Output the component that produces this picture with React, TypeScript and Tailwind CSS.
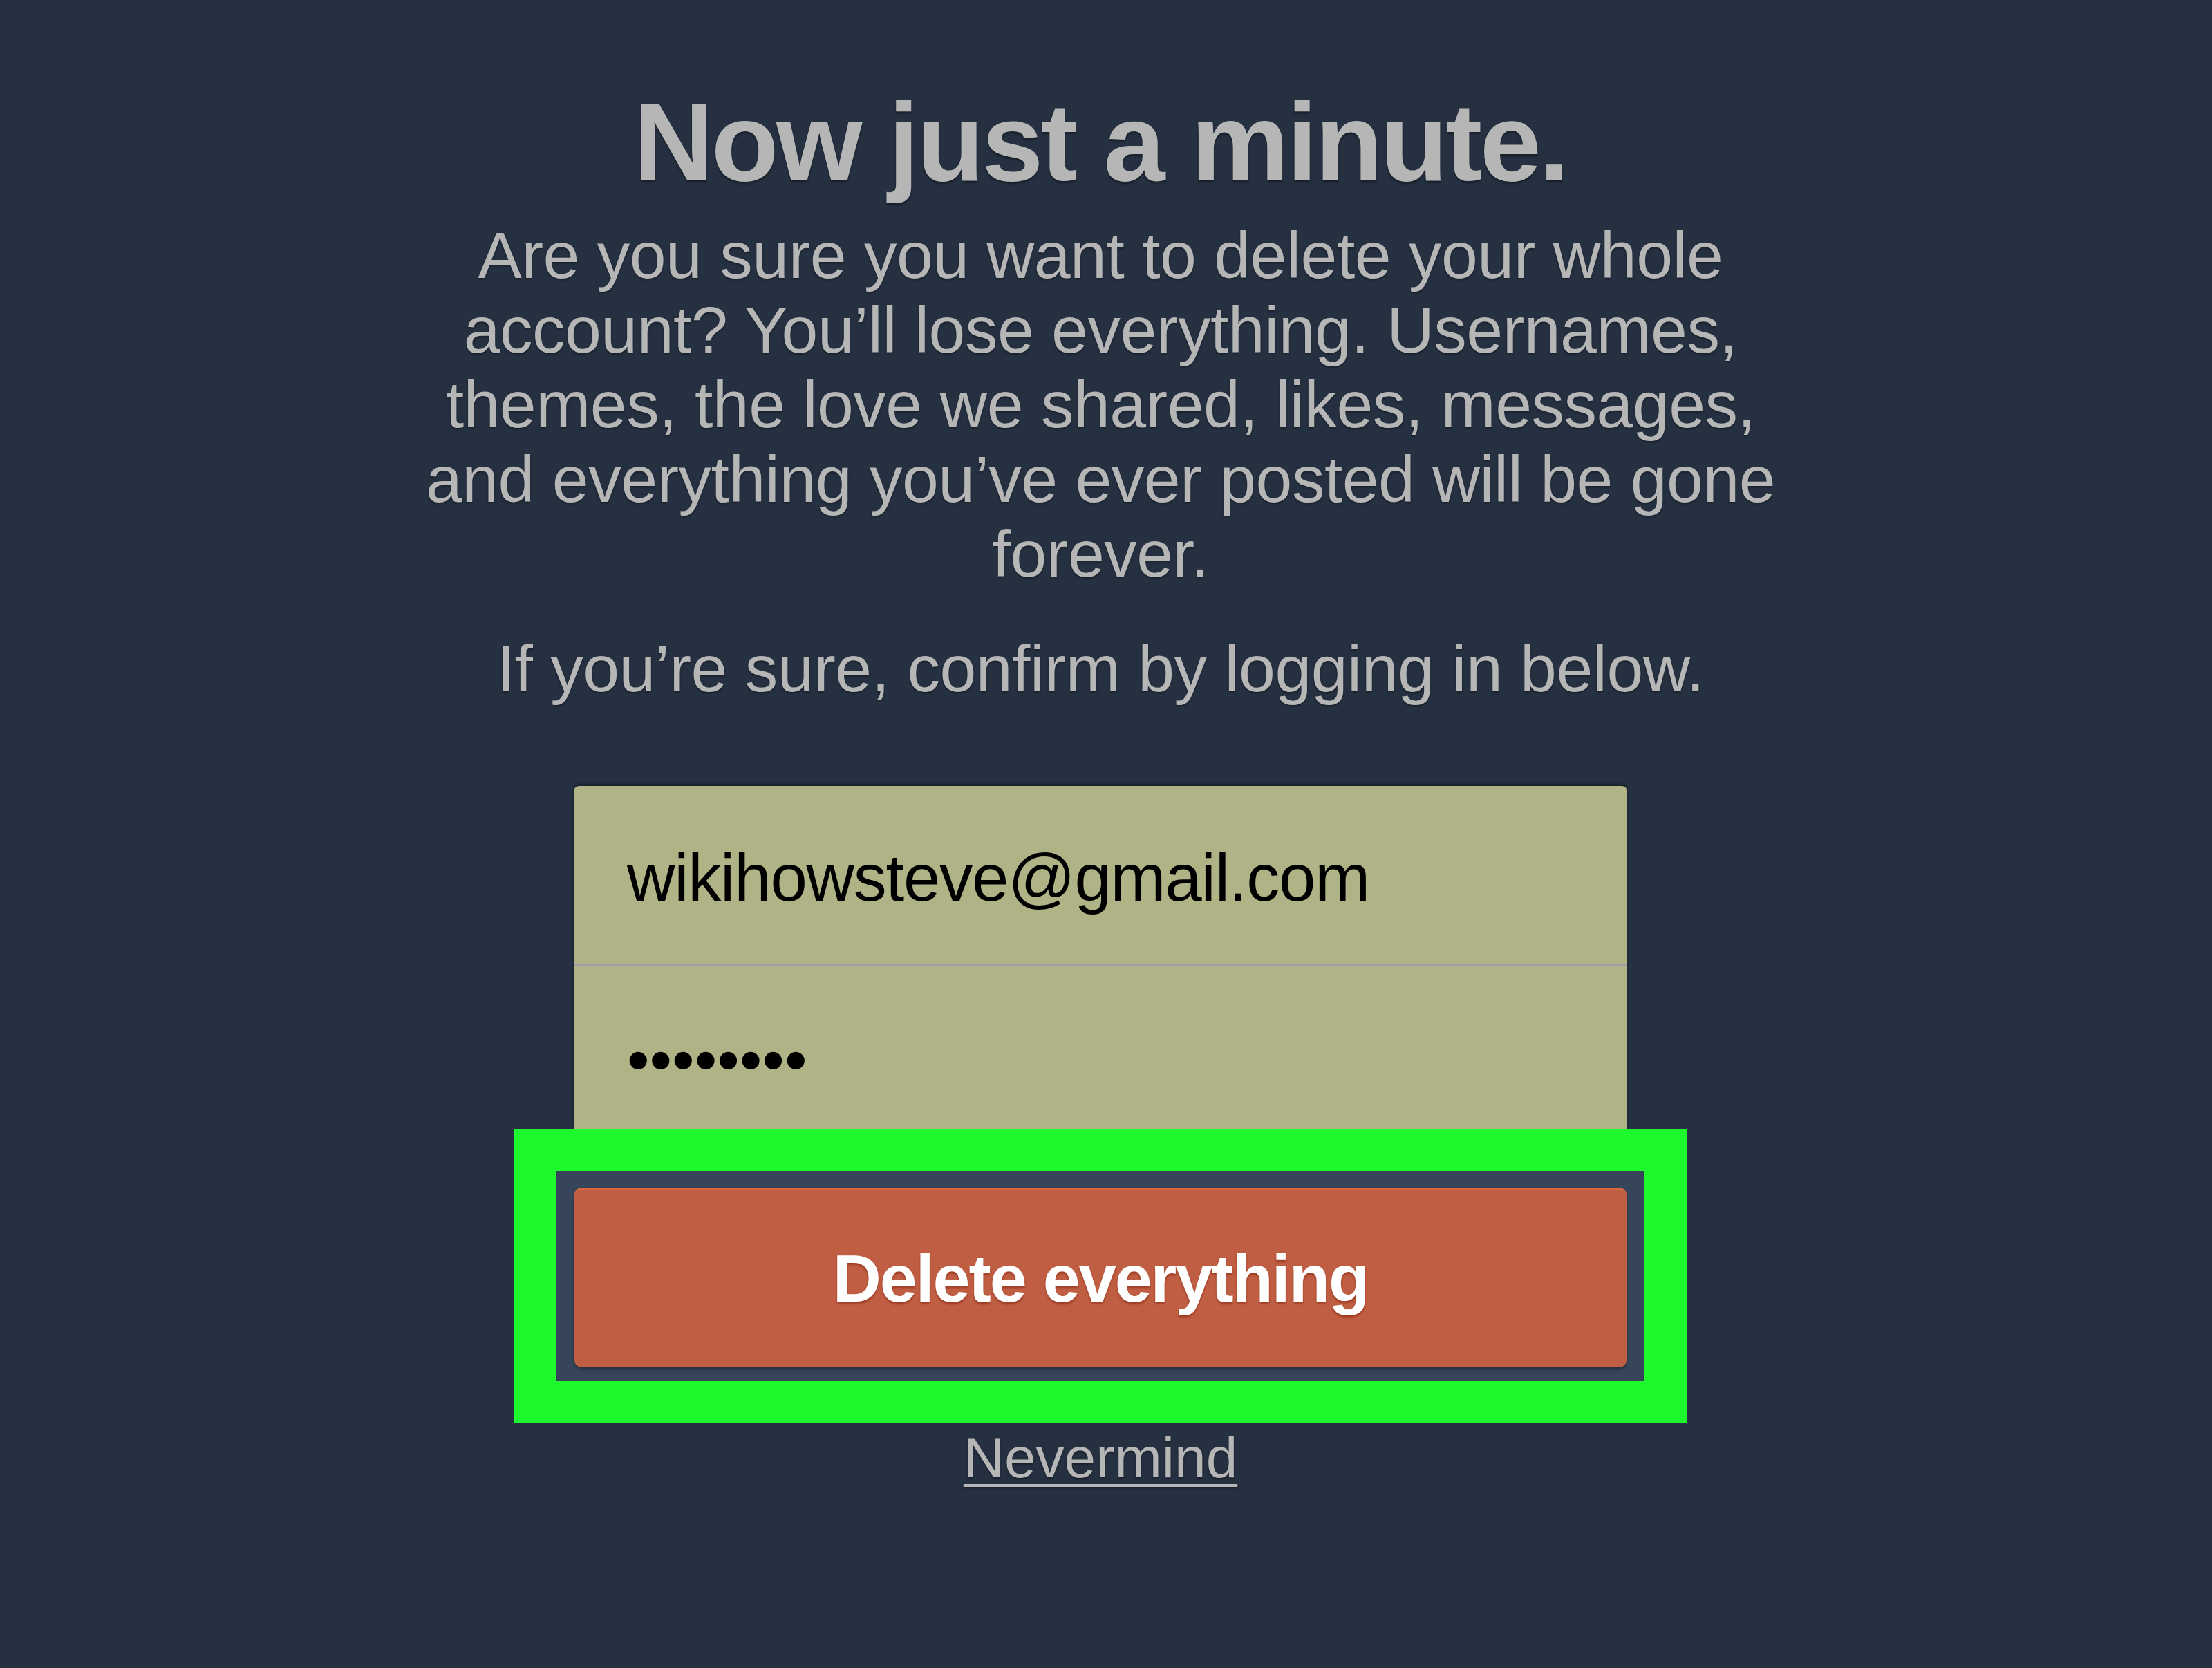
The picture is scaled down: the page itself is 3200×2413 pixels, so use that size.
import { useState } from 'react'

const font = { fontFamily: '"Liberation Sans", Arial, sans-serif' }

export default function App() {
  const [email, setEmail] = useState('wikihowsteve@gmail.com')
  const [password, setPassword] = useState('12345678')

  return (
    <div
      style={font}
      className="min-h-[2413px] w-full bg-[#253041] flex flex-col items-center pr-[16px] text-[#b6b6b6]"
    >
      <h1 className="pt-[126px] text-[160px] leading-none font-bold tracking-[-3.5px] [text-shadow:0_3px_3px_rgba(0,0,0,0.35)]">
        Now just a minute.
      </h1>

      <p className="mt-[29px] w-[2010px] text-center text-[95px] leading-[108px] tracking-[-0.5px] [text-shadow:0_2px_3px_rgba(0,0,0,0.35)]">
        Are you sure you want to delete your whole account? You’ll lose everything. Usernames, themes, the love
        we shared, likes, messages, and everything you’ve ever posted will be gone forever.
      </p>

      <p className="mt-[58px] text-center text-[95px] leading-[108px] tracking-[-0.5px] [text-shadow:0_2px_3px_rgba(0,0,0,0.35)]">
        If you’re sure, confirm by logging in below.
      </p>

      <form className="mt-[116px] flex w-[1524px] flex-col" onSubmit={(e) => e.preventDefault()}>
        <div className="flex flex-col rounded-t-[8px] bg-[#b0b385] shadow-[0_-3px_4px_rgba(0,0,0,0.35)]">
          <input
            type="email"
            value={email}
            onChange={(e) => setEmail(e.target.value)}
            className="h-[261px] w-full border-b-[3px] border-[#9d9ea9] bg-transparent pl-[77px] pt-[8px] text-[96px] tracking-[-1.2px] text-black outline-none"
          />
          <input
            type="password"
            value={password}
            onChange={(e) => setPassword(e.target.value)}
            className="h-[235px] w-full bg-transparent pl-[77px] pt-[36px] text-[93px] text-black outline-none"
          />
        </div>

        <div className="-mx-[86px] border-[61px] border-[#1ef92e] bg-[#36455a] pt-[24px] pb-[20px] pl-[26px] pr-[26px]">
          <button
            type="submit"
            className="flex h-[260px] w-full items-center justify-center rounded-[10px] border-t-[3px] border-[#d8663f] bg-[#bf5e42] text-[97px] font-bold tracking-[-2px] text-white [text-shadow:0_3px_3px_rgba(120,20,0,0.45)] shadow-[0_3px_4px_rgba(0,0,0,0.3)]"
          >
            Delete everything
          </button>
        </div>
      </form>

      <a
        href="#"
        className="mt-[9px] text-[82px] leading-none text-[#b6b6b6] underline decoration-[4px] underline-offset-[10px] [text-shadow:0_2px_3px_rgba(0,0,0,0.35)]"
      >
        Nevermind
      </a>
    </div>
  )
}
